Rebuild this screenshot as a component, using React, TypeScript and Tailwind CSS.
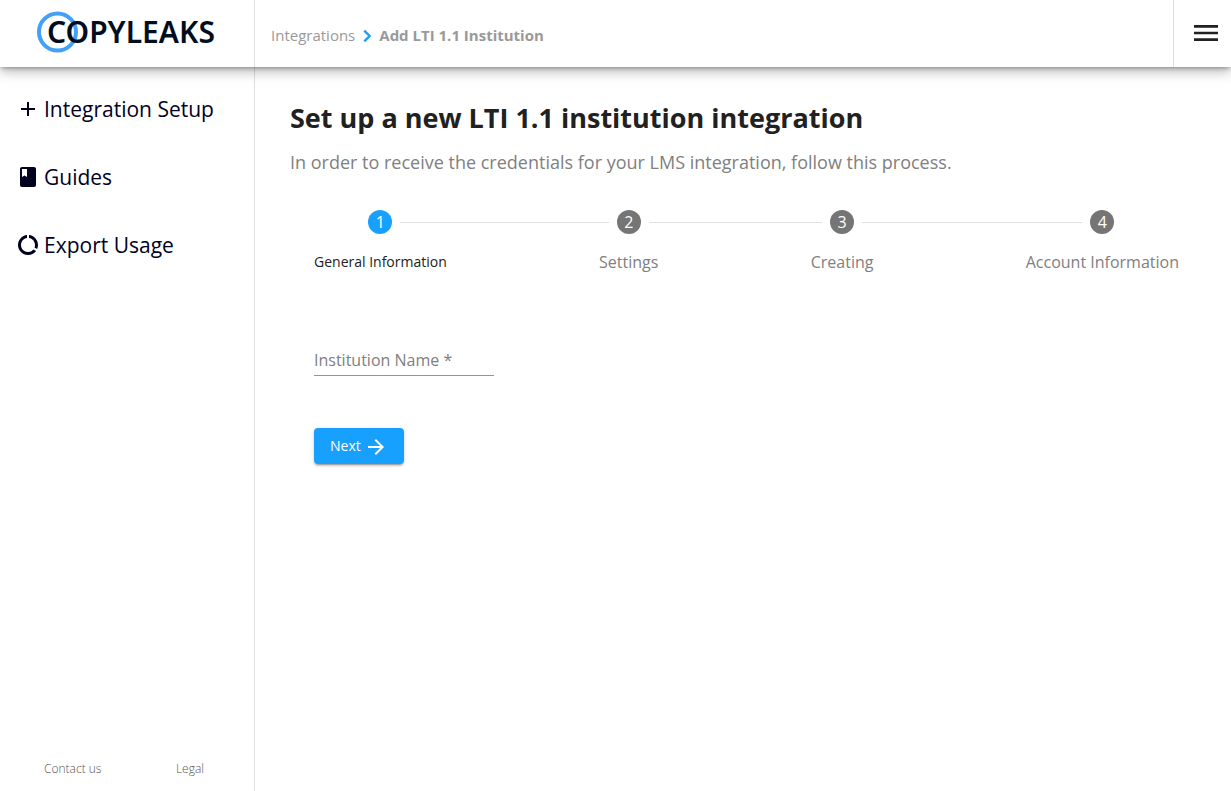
import { Fragment, useState } from "react";
import type { ReactNode } from "react";
import { MdAdd, MdArrowForward, MdBook, MdDataUsage, MdMenu } from "react-icons/md";

const steps = ["General Information", "Settings", "Creating", "Account Information"];

function Logo() {
  return (
    <svg width="184" height="44" viewBox="0 0 184 44" role="img" aria-label="Copyleaks">
      <circle cx="21.5" cy="22" r="18.5" fill="none" stroke="#42a0f8" strokeWidth="4" />
      <text x="11" y="33" fill="#020d20" fontFamily="Noto Sans, Open Sans, sans-serif" fontWeight="600" fontSize="30">
        COPYLEAKS
      </text>
    </svg>
  );
}

function Chevron() {
  return (
    <svg viewBox="0 0 24 24" className="size-6 text-[#18a0ff]" aria-hidden="true">
      <path d="M9.3 6.7 14.6 12l-5.3 5.3" fill="none" stroke="currentColor" strokeWidth="2.4" />
    </svg>
  );
}

function NavItem({ icon, label }: { icon: ReactNode; label: string }) {
  return (
    <a href="#" className="flex h-[68px] items-center gap-1 px-4 text-[21px] text-[#00001f]">
      <span className="pb-0.5">{icon}</span>
      {label}
    </a>
  );
}

function Stepper({ active }: { active: number }) {
  return (
    <ol className="flex">
      {steps.map((label, i) => (
        <Fragment key={label}>
          {i > 0 && <li aria-hidden="true" className="mt-3 h-px flex-1 bg-[#e0e0e0]" />}
          <li className="flex flex-col gap-4">
            <div className="flex items-center gap-2">
              <span className={i > 0 ? "h-px flex-1 bg-[#e0e0e0]" : "h-px flex-1"} />
              <span
                className={
                  i === active
                    ? "flex size-6 items-center justify-center rounded-full bg-[#18a0ff] text-base text-white"
                    : "flex size-6 items-center justify-center rounded-full bg-[#757575] text-base text-white"
                }
              >
                {i + 1}
              </span>
              <span className={i < steps.length - 1 ? "h-px flex-1 bg-[#e0e0e0]" : "h-px flex-1"} />
            </div>
            <span
              className={
                i === active
                  ? "px-6 text-sm leading-6 text-[#212121]"
                  : "px-6 text-base leading-6 text-[#808080]"
              }
            >
              {label}
            </span>
          </li>
        </Fragment>
      ))}
    </ol>
  );
}

export default function App() {
  const [name, setName] = useState("");
  return (
    <div className="flex min-h-screen flex-col bg-white font-['Open_Sans',sans-serif] text-[#212121]">
      <header className="z-10 flex h-[67px] shadow-[0_2px_4px_-1px_rgba(0,0,0,0.3),0_4px_12px_0_rgba(0,0,0,0.3)]">
        <a href="#" className="flex w-[255px] shrink-0 border-r border-[#dedede] pt-2.5 pl-9">
          <Logo />
        </a>
        <nav aria-label="Breadcrumb" className="flex flex-1 items-center pt-1 pl-4 text-[15px] text-[#999999]">
          <a href="#">Integrations</a>
          <Chevron />
          <span className="font-bold">Add LTI 1.1 Institution</span>
        </nav>
        <button
          type="button"
          aria-label="Menu"
          className="flex w-[58px] items-center justify-end border-l border-[#dedede] pr-[9px] pb-px"
        >
          <MdMenu className="size-8" />
        </button>
      </header>
      <div className="flex flex-1">
        <aside className="flex w-[255px] shrink-0 flex-col justify-between border-r border-[#dedede] pt-[9px]">
          <nav>
            <NavItem icon={<MdAdd className="size-6" />} label="Integration Setup" />
            <NavItem icon={<MdBook className="size-6" />} label="Guides" />
            <NavItem icon={<MdDataUsage className="size-6" />} label="Export Usage" />
          </nav>
          <footer className="flex justify-between pr-[50px] pb-3.5 pl-11 text-xs leading-4 font-light text-[#555555]">
            <a href="#">Contact us</a>
            <a href="#">Legal</a>
          </footer>
        </aside>
        <main className="flex-1 pt-[31px] pr-7 pl-[35px]">
          <h1 className="text-[27px] leading-10 font-bold">Set up a new LTI 1.1 institution integration</h1>
          <p className="mt-2.5 text-[18px] leading-7 text-[#808080]">
            In order to receive the credentials for your LMS integration, follow this process.
          </p>
          <div className="mt-[34px]">
            <Stepper active={0} />
          </div>
          <form className="mt-[74px] px-6" onSubmit={(e) => e.preventDefault()}>
            <input
              type="text"
              aria-label="Institution Name"
              required
              value={name}
              onChange={(e) => setName(e.target.value)}
              placeholder="Institution Name *"
              className="block h-7 w-[180px] border-b border-[#949494] pb-1 text-base outline-none placeholder:text-[#808080] placeholder:opacity-100"
            />
            <button
              type="submit"
              className="mt-[52px] flex h-9 items-center gap-[3px] rounded bg-[#18a0ff] px-4 text-sm font-medium text-white shadow-[0_3px_1px_-2px_rgba(0,0,0,0.2),0_2px_2px_0_rgba(0,0,0,0.14),0_1px_5px_0_rgba(0,0,0,0.12)]"
            >
              Next
              <span className="pt-0.5">
                <MdArrowForward className="size-6" />
              </span>
            </button>
          </form>
        </main>
      </div>
    </div>
  );
}
